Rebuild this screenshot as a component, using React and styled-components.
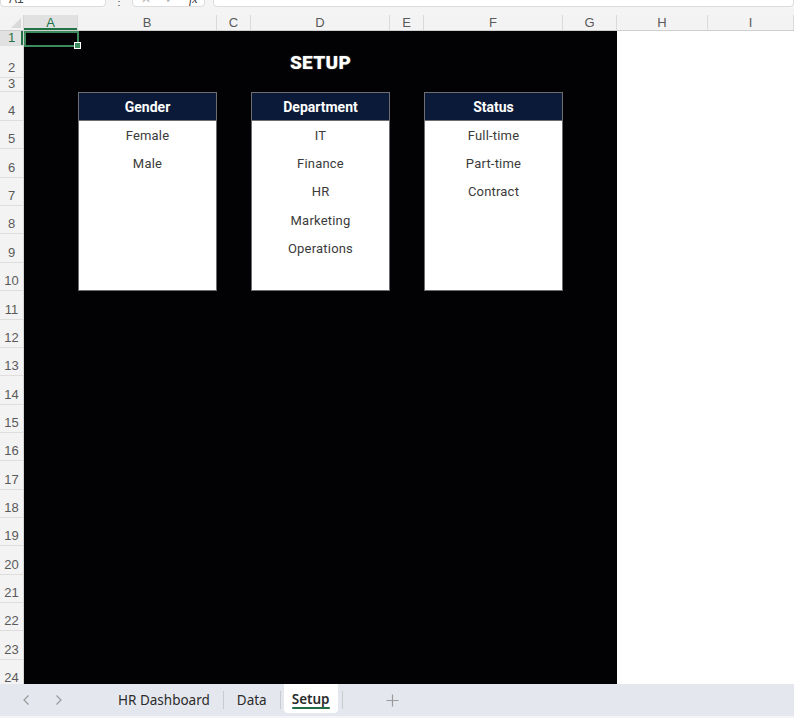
import React from "react";
import styled, { createGlobalStyle } from "styled-components";

const Global = createGlobalStyle`
  html, body { margin: 0; padding: 0; background: #fff; }
  body { font-family: "Noto Sans", "Liberation Sans", sans-serif; }
  * { box-sizing: border-box; }
`;

const COLS = [
  { l: "A", w: 54 },
  { l: "B", w: 139 },
  { l: "C", w: 34 },
  { l: "D", w: 139 },
  { l: "E", w: 34 },
  { l: "F", w: 139 },
  { l: "G", w: 54 },
  { l: "H", w: 91 },
  { l: "I", w: 86 },
];

const ROWS = [15, 32, 14, 29, ...Array(20).fill(28.37)];

const Page = styled.div`
  width: 794px;
  height: 718px;
  display: flex;
  flex-direction: column;
  overflow: hidden;
  background: #f3f3f3;
`;

const FormulaBar = styled.div`
  height: 15px;
  flex: none;
  display: flex;
  align-items: flex-end;
  gap: 8px;
  padding-bottom: 8px;
  overflow: hidden;
  background: #f4f4f4;
`;

const Box = styled.div`
  flex: ${(p) => (p.$grow ? 1 : "none")};
  width: ${(p) => (p.$w ? `${p.$w}px` : "auto")};
  height: 20px;
  background: #fff;
  border: 1px solid #dcdcdc;
  border-radius: 4px;
  display: flex;
  align-items: flex-end;
  gap: 14px;
  padding: 0 8px 1px;
  font-family: "Liberation Sans", sans-serif;
  font-size: 12px;
  line-height: 1;
  color: #444;
`;

const Caret = styled.span`
  font-size: 10px;
  color: #444;
  width: 10px;
  text-align: center;
  line-height: 1;
  margin-bottom: 1px;
`;

const Glyph = styled.span`
  color: ${(p) => (p.$dark ? "#333" : "#b5b5b5")};
  font-style: ${(p) => (p.$it ? "italic" : "normal")};
  font-family: "Liberation Serif", serif;
  font-size: 12px;
`;

const ColHeader = styled.div`
  height: 16px;
  flex: none;
  display: grid;
  grid-template-columns: 24px ${COLS.map((c) => `${c.w}px`).join(" ")};
  background: #f3f3f3;
  border-bottom: 1px solid #cfcfcf;
`;

const Corner = styled.div`
  position: relative;
  border-right: 1px solid #d6d6d6;
  &::after {
    content: "";
    position: absolute;
    right: 2px;
    bottom: 2px;
    border-left: 10px solid transparent;
    border-bottom: 10px solid #dadada;
  }
`;

const ColCell = styled.div`
  display: flex;
  align-items: center;
  justify-content: center;
  font-family: "Liberation Sans", sans-serif;
  font-size: 13px;
  color: ${(p) => (p.$active ? "#217346" : "#5a5a5a")};
  background: ${(p) => (p.$active ? "#e1e1e1" : "transparent")};
  border-right: 1px solid #dadada;
  box-shadow: ${(p) => (p.$active ? "inset 0 -2px 0 #217346" : "none")};
  line-height: 1;
`;

const Body = styled.div`
  flex: 1;
  display: flex;
  overflow: hidden;
  background: #fff;
`;

const RowHeads = styled.div`
  width: 24px;
  flex: none;
  display: flex;
  flex-direction: column;
  background: #f3f3f3;
  border-right: 1px solid #d6d6d6;
`;

const RowHead = styled.div`
  flex: none;
  display: flex;
  align-items: flex-end;
  justify-content: center;
  padding-bottom: ${(p) => (p.$h < 20 ? 1 : 3)}px;
  font-family: "Liberation Sans", sans-serif;
  font-size: 13px;
  line-height: 1;
  color: ${(p) => (p.$active ? "#217346" : "#5a5a5a")};
  background: ${(p) => (p.$active ? "#e1e1e1" : "transparent")};
  border-bottom: 1px solid #dedede;
  box-shadow: ${(p) => (p.$active ? "inset -2px 0 0 #217346" : "none")};
  overflow: hidden;
`;

const Panel = styled.div`
  width: 593px;
  flex: none;
  position: relative;
  background: #020204;
  display: flex;
  flex-direction: column;
`;

const Selection = styled.div`
  position: absolute;
  left: 0;
  top: 0;
  width: 55px;
  height: 16px;
  border: 2px solid #3d8a5c;
  &::after {
    content: "";
    position: absolute;
    right: -4px;
    bottom: -4px;
    width: 5px;
    height: 5px;
    background: #3d8a5c;
    border: 1px solid #fff;
  }
`;

const TitleBlock = styled.div`
  height: 61px;
  flex: none;
  display: flex;
  align-items: center;
  justify-content: center;
  padding-top: 1px;
`;

const Title = styled.h1`
  margin: 0;
  font-family: Roboto, "Noto Sans", sans-serif;
  font-weight: 900;
  font-size: 19px;
  letter-spacing: 0.3px;
  color: #fff;
  text-shadow: 0 0 2px #555;
`;

const TablesRow = styled.div`
  display: flex;
  gap: 34px;
  padding-left: 54px;
`;

const Table = styled.div`
  width: 139px;
  display: flex;
  flex-direction: column;
  background: #fff;
  border: 1px solid #6e6e72;
`;

const THead = styled.div`
  height: 28px;
  display: flex;
  align-items: center;
  justify-content: center;
  background: #0b1a38;
  border-bottom: 1px solid #6e6e72;
  font-family: Roboto, "Noto Sans", sans-serif;
  font-weight: 700;
  font-size: 14px;
  color: #fff;
`;

const TBody = styled.div`
  height: 169px;
  display: flex;
  flex-direction: column;
`;

const TItem = styled.div`
  height: 28.37px;
  flex: none;
  display: flex;
  align-items: center;
  justify-content: center;
  font-family: Roboto, "Noto Sans", sans-serif;
  font-size: 13px;
  letter-spacing: 0.2px;
  color: #3b3b3b;
`;

const WhiteArea = styled.div`
  flex: 1;
  background: #fff;
`;

const TabBar = styled.div`
  height: 34px;
  flex: none;
  display: flex;
  align-items: stretch;
  background: #e5e7ee;
  border-bottom: 2px solid #f3f4f7;
  font-family: "Noto Sans", sans-serif;
`;

const Nav = styled.div`
  display: flex;
  align-items: center;
  gap: 23px;
  padding-left: 22px;
  width: 105px;
  color: #9a9a9a;
`;

const Tab = styled.div`
  display: flex;
  align-items: center;
  padding: 0 ${(p) => (p.$active ? 8 : 13)}px;
  margin: ${(p) => (p.$active ? "0 4px 3px 3px" : "0")};
  font-size: 13.5px;
  font-weight: ${(p) => (p.$active ? 600 : 400)};
  color: #2b2b2b;
  background: ${(p) => (p.$active ? "#ffffff" : "transparent")};
  border-radius: ${(p) => (p.$active ? "0 0 4px 4px" : "0")};
  position: relative;
  &::after {
    content: "";
    display: ${(p) => (p.$active ? "block" : "none")};
    position: absolute;
    left: 8px;
    right: 8px;
    bottom: 4px;
    height: 2px;
    background: #1f6e43;
    border-radius: 1px;
  }
`;

const Sep = styled.div`
  width: 1px;
  align-self: center;
  height: 18px;
  background: #c9cbd2;
`;

const Plus = styled.div`
  display: flex;
  align-items: center;
  padding-left: 43px;
  color: #9a9a9a;
`;

const tables = [
  { title: "Gender", items: ["Female", "Male"] },
  { title: "Department", items: ["IT", "Finance", "HR", "Marketing", "Operations"] },
  { title: "Status", items: ["Full-time", "Part-time", "Contract"] },
];

const Chevron = ({ dir }) => (
  <svg width="9" height="12" viewBox="0 0 9 12" fill="none" stroke="#9a9a9a" strokeWidth="1.2">
    {dir === "left" ? <path d="M6.5 1.5 L2 6 L6.5 10.5" /> : <path d="M2.5 1.5 L7 6 L2.5 10.5" />}
  </svg>
);

export default function App() {
  return (
    <Page>
      <Global />
      <FormulaBar>
        <Box $w={106}>A1</Box>
        <Caret>⋮</Caret>
        <Box $w={73}>
          <Glyph>✕</Glyph>
          <Glyph>✓</Glyph>
          <Glyph $dark $it>fx</Glyph>
        </Box>
        <Box $grow />
      </FormulaBar>
      <ColHeader>
        <Corner />
        {COLS.map((c) => (
          <ColCell key={c.l} $active={c.l === "A"}>
            {c.l}
          </ColCell>
        ))}
      </ColHeader>
      <Body>
        <RowHeads>
          {ROWS.map((h, i) => (
            <RowHead key={i} $h={h} $active={i === 0} style={{ height: h }}>
              {i + 1}
            </RowHead>
          ))}
        </RowHeads>
        <Panel>
          <Selection />
          <TitleBlock>
            <Title>SETUP</Title>
          </TitleBlock>
          <TablesRow>
            {tables.map((t) => (
              <Table key={t.title}>
                <THead>{t.title}</THead>
                <TBody>
                  {t.items.map((it) => (
                    <TItem key={it}>{it}</TItem>
                  ))}
                </TBody>
              </Table>
            ))}
          </TablesRow>
        </Panel>
        <WhiteArea />
      </Body>
      <TabBar>
        <Nav>
          <Chevron dir="left" />
          <Chevron dir="right" />
        </Nav>
        <Tab>HR Dashboard</Tab>
        <Sep />
        <Tab>Data</Tab>
        <Sep />
        <Tab $active>Setup</Tab>
        <Sep />
        <Plus>
          <svg width="13" height="13" viewBox="0 0 13 13" stroke="#9a9a9a" strokeWidth="1.2">
            <path d="M6.5 0.5 V12.5 M0.5 6.5 H12.5" />
          </svg>
        </Plus>
      </TabBar>
    </Page>
  );
}
